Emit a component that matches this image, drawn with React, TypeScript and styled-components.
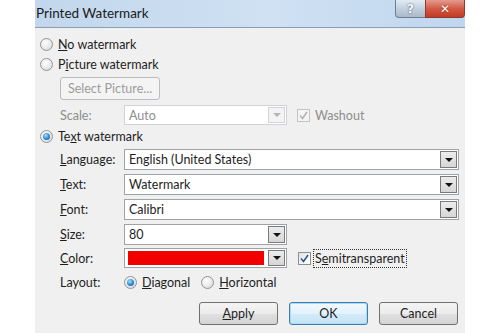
import React from 'react';
import styled, { createGlobalStyle, css } from 'styled-components';

const GlobalStyle = createGlobalStyle`
  html, body {
    margin: 0;
    padding: 0;
    background: #ffffff;
  }
  body {
    font-family: Lato, "Noto Sans", "DejaVu Sans", sans-serif;
    font-size: 12.5px;
    color: #1e1e1e;
  }
`;

const Page = styled.div`
  width: 500px;
  height: 333px;
  overflow: hidden;
  padding-left: 35px;
  box-sizing: border-box;
`;

const Dialog = styled.div`
  width: 430px;
  height: 333px;
  background: #f0f0f0;
  display: flex;
  flex-direction: column;
`;

const TitleBar = styled.div`
  height: 28px;
  flex: none;
  display: flex;
  align-items: flex-start;
  box-sizing: border-box;
  background: linear-gradient(to right, #c2d7ed 0%, #cfe1f3 55%, #c0d6ee 100%);
  border-bottom: 1px solid #8a9db3;
`;

const TitleText = styled.div`
  font-size: 13.5px;
  line-height: 18px;
  padding: 4px 0 0 1px;
  color: #1a1a1a;
`;

const CaptionButton = styled.div<{ $close?: boolean }>`
  width: ${(p) => (p.$close ? 40 : 30)}px;
  height: 18px;
  box-sizing: border-box;
  display: flex;
  align-items: center;
  justify-content: center;
  font-family: "DejaVu Sans", sans-serif;
  font-weight: bold;
  font-size: 12px;
  color: #ffffff;
  border: 1px solid ${(p) => (p.$close ? '#8a3a30' : '#6d7e92')};
  border-top: none;
  ${(p) =>
    p.$close
      ? css`
          background: linear-gradient(#e49b8e, #d45a46 50%, #c23a24);
          border-radius: 0 0 4px 0;
          text-shadow: 0 0 2px #7a2010;
        `
      : css`
          margin-left: auto;
          background: linear-gradient(#e3ebf4, #c3d0de 50%, #a9b9cb);
          border-radius: 0 0 0 4px;
          border-right: none;
          color: #f6f9fc;
          text-shadow: 0 0 2px #34475c;
        `}
`;

const Body = styled.div`
  flex: 1;
  display: flex;
  flex-direction: column;
  padding: 7px 6px 0 5px;
`;

const Row = styled.div<{ $top: number; $h: number; $indent?: number }>`
  display: flex;
  align-items: center;
  margin-top: ${(p) => p.$top}px;
  height: ${(p) => p.$h}px;
  padding-left: ${(p) => p.$indent || 0}px;
  flex: none;
`;

const FieldRow = styled.div<{ $top: number; $h: number }>`
  display: grid;
  grid-template-columns: 64px 1fr;
  align-items: center;
  margin-top: ${(p) => p.$top}px;
  height: ${(p) => p.$h}px;
  padding-left: 20px;
  flex: none;
`;

const Label = styled.span<{ $disabled?: boolean }>`
  color: ${(p) => (p.$disabled ? '#8d8d8d' : '#1e1e1e')};
  white-space: nowrap;
`;

const RadioCircle = styled.span<{ $on?: boolean }>`
  width: 13px;
  height: 13px;
  border-radius: 50%;
  box-sizing: border-box;
  border: 1px solid #8f969c;
  background: radial-gradient(circle at 40% 35%, #ffffff 0%, #e6e6e6 60%, #cfcfcf 100%);
  display: inline-flex;
  align-items: center;
  justify-content: center;
  flex: none;
  margin-right: 5px;
  &::after {
    content: '';
    display: ${(p) => (p.$on ? 'block' : 'none')};
    width: 7px;
    height: 7px;
    border-radius: 50%;
    background: radial-gradient(circle at 40% 35%, #a9dcf7 0%, #2a8ad4 55%, #17508c 100%);
  }
`;

const CheckBox = styled.span<{ $disabled?: boolean }>`
  width: 13px;
  height: 13px;
  box-sizing: border-box;
  border: 1px solid ${(p) => (p.$disabled ? '#c4c4c4' : '#8f8f8f')};
  background: ${(p) => (p.$disabled ? '#f4f4f4' : 'linear-gradient(135deg, #dfe3e8, #ffffff)')};
  display: inline-flex;
  align-items: center;
  justify-content: center;
  flex: none;
  svg {
    display: block;
  }
`;

const PlainButton = styled.div<{ $w: number; $disabled?: boolean; $default?: boolean }>`
  width: ${(p) => p.$w}px;
  height: 23px;
  box-sizing: border-box;
  border: 1px solid ${(p) => (p.$disabled ? '#b9bdc1' : p.$default ? '#3c7fb1' : '#707070')};
  border-radius: 3px;
  display: flex;
  align-items: center;
  justify-content: center;
  color: ${(p) => (p.$disabled ? '#9c9c9c' : '#1e1e1e')};
  background: ${(p) =>
    p.$disabled
      ? '#f4f4f4'
      : p.$default
      ? 'linear-gradient(#f0f8fd, #e3f2fb 50%, #d3ebf9 51%, #c4e3f5)'
      : 'linear-gradient(#f4f4f4, #ececec 50%, #e0e0e0 51%, #d4d4d4)'};
  ${(p) => p.$default && css`box-shadow: inset 0 0 0 1px #a9dbf6;`}
`;

const Combo = styled.div<{ $w?: number; $disabled?: boolean }>`
  width: ${(p) => (p.$w ? `${p.$w}px` : '100%')};
  height: 100%;
  box-sizing: border-box;
  border: 1px solid ${(p) => (p.$disabled ? '#cfd2d6' : '#9ea3a8')};
  background: #ffffff;
  display: flex;
  align-items: stretch;
  padding: 1px;
`;

const ComboText = styled.div<{ $disabled?: boolean }>`
  flex: 1;
  display: flex;
  align-items: center;
  padding-left: 3px;
  color: ${(p) => (p.$disabled ? '#8d8d8d' : '#1e1e1e')};
  white-space: nowrap;
  overflow: hidden;
`;

const Swatch = styled.div`
  flex: 1;
  margin: 1px 4px 1px 2px;
  background: #f20000;
`;

const ArrowButton = styled.div<{ $disabled?: boolean }>`
  width: 17px;
  flex: none;
  box-sizing: border-box;
  border: 1px solid ${(p) => (p.$disabled ? '#d3d3d3' : '#7b7b7b')};
  background: ${(p) => (p.$disabled ? '#f4f4f4' : 'linear-gradient(#ececec, #d6d6d6)')};
  display: flex;
  align-items: center;
  justify-content: center;
  &::after {
    content: '';
    width: 0;
    height: 0;
    border-left: 4px solid transparent;
    border-right: 4px solid transparent;
    border-top: 4px solid ${(p) => (p.$disabled ? '#b5b5b5' : '#111111')};
  }
`;

const Check = ({ color }: { color: string }) => (
  <svg width="9" height="9" viewBox="0 0 9 9">
    <path d="M1 4.5 L3.5 7.5 L8 1" fill="none" stroke={color} strokeWidth="1.4" />
  </svg>
);

const FocusLabel = styled.span`
  margin-left: 3px;
  padding: 1px 1px;
  outline: 1px dotted #333333;
  outline-offset: 0;
`;

const ButtonBar = styled.div`
  margin-top: 11px;
  height: 23px;
  display: flex;
  justify-content: flex-end;
  gap: 11px;
  padding-right: 1px;
`;

function ComboBox({ text, w, disabled }: { text: React.ReactNode; w?: number; disabled?: boolean }) {
  return (
    <Combo $w={w} $disabled={disabled}>
      <ComboText $disabled={disabled}>{text}</ComboText>
      <ArrowButton $disabled={disabled} />
    </Combo>
  );
}

export default function App() {
  return (
    <Page>
      <GlobalStyle />
      <Dialog>
        <TitleBar>
          <TitleText>Printed Watermark</TitleText>
          <CaptionButton>?</CaptionButton>
          <CaptionButton $close>✕</CaptionButton>
        </TitleBar>
        <Body>
          <Row $top={0} $h={18}>
            <RadioCircle />
            <Label>
              <u>N</u>o watermark
            </Label>
          </Row>
          <Row $top={2} $h={18}>
            <RadioCircle />
            <Label>
              P<u>i</u>cture watermark
            </Label>
          </Row>
          <Row $top={4} $h={23} $indent={20}>
            <PlainButton $w={100} $disabled>
              Select Picture...
            </PlainButton>
          </Row>
          <FieldRow $top={5} $h={20}>
            <Label $disabled>Scale:</Label>
            <Row $top={0} $h={20}>
              <ComboBox text="Auto" w={163} disabled />
              <Row $top={0} $h={20} $indent={10}>
                <CheckBox $disabled>
                  <Check color="#b0b0b0" />
                </CheckBox>
                <Label $disabled style={{ marginLeft: 5 }}>
                  Washout
                </Label>
              </Row>
            </Row>
          </FieldRow>
          <Row $top={2} $h={18}>
            <RadioCircle $on />
            <Label>
              Te<u>x</u>t watermark
            </Label>
          </Row>
          <FieldRow $top={4} $h={21}>
            <Label>
              <u>L</u>anguage:
            </Label>
            <ComboBox text="English (United States)" />
          </FieldRow>
          <FieldRow $top={4} $h={21}>
            <Label>
              <u>T</u>ext:
            </Label>
            <ComboBox text="Watermark" />
          </FieldRow>
          <FieldRow $top={4} $h={21}>
            <Label>
              <u>F</u>ont:
            </Label>
            <ComboBox text="Calibri" />
          </FieldRow>
          <FieldRow $top={4} $h={21}>
            <Label>
              <u>S</u>ize:
            </Label>
            <ComboBox text="80" w={163} />
          </FieldRow>
          <FieldRow $top={3} $h={20}>
            <Label>
              <u>C</u>olor:
            </Label>
            <Row $top={0} $h={20}>
              <Combo $w={163}>
                <Swatch />
                <ArrowButton />
              </Combo>
              <Row $top={0} $h={20} $indent={11}>
                <CheckBox>
                  <Check color="#2c4f80" />
                </CheckBox>
                <FocusLabel>
                  S<u>e</u>mitransparent
                </FocusLabel>
              </Row>
            </Row>
          </FieldRow>
          <FieldRow $top={5} $h={18}>
            <Label>Layout:</Label>
            <Row $top={0} $h={18}>
              <RadioCircle $on />
              <Label>
                <u>D</u>iagonal
              </Label>
              <Row $top={0} $h={18} $indent={11}>
                <RadioCircle />
                <Label>
                  <u>H</u>orizontal
                </Label>
              </Row>
            </Row>
          </FieldRow>
          <ButtonBar>
            <PlainButton $w={79}>
              <span>
                <u>A</u>pply
              </span>
            </PlainButton>
            <PlainButton $w={79} $default>
              OK
            </PlainButton>
            <PlainButton $w={79}>Cancel</PlainButton>
          </ButtonBar>
        </Body>
      </Dialog>
    </Page>
  );
}
